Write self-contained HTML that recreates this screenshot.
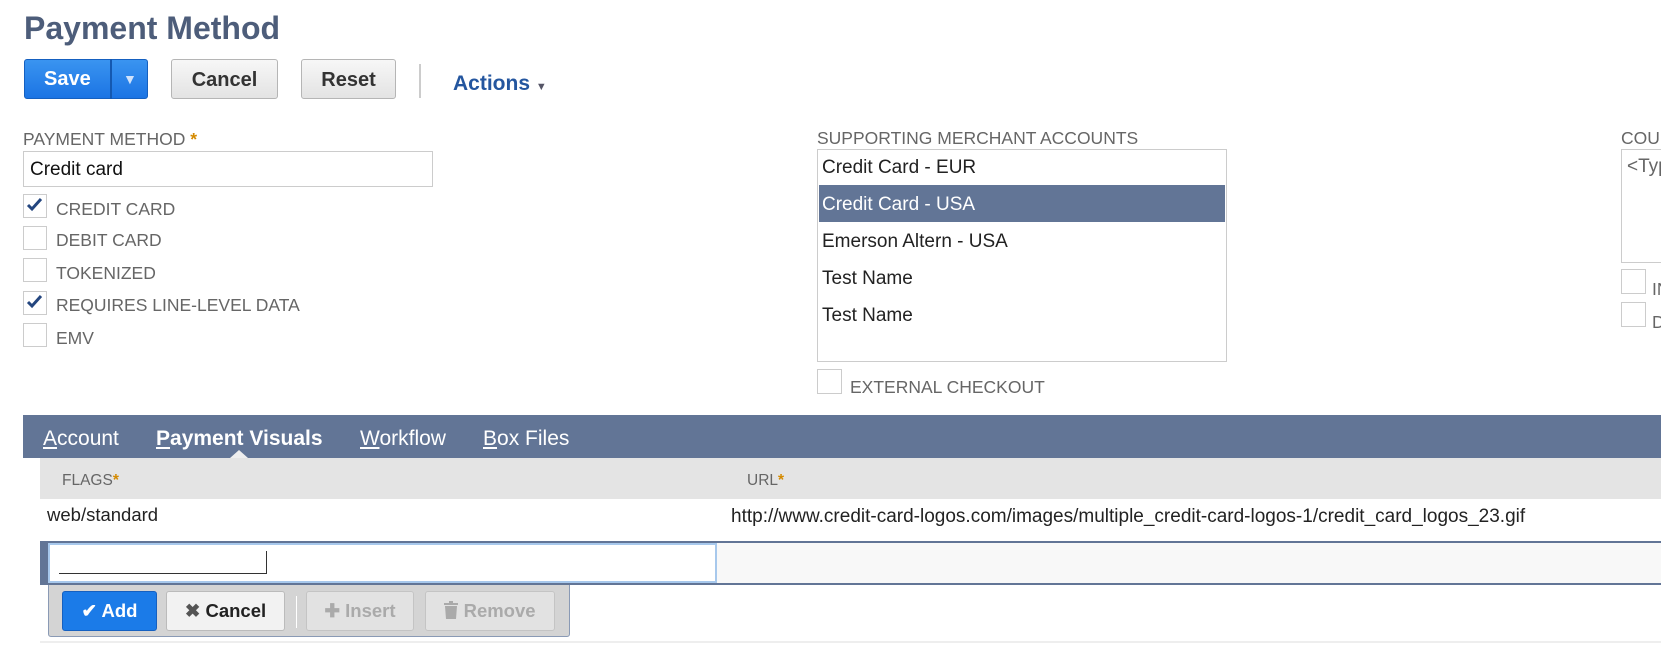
<!DOCTYPE html>
<html><head><meta charset="utf-8"><style>
*{box-sizing:border-box;margin:0;padding:0}
body{width:1661px;height:657px;background:#fff;font-family:"Liberation Sans",sans-serif;position:relative;overflow:hidden;color:#222}
.a{position:absolute;white-space:nowrap}
.btn{position:absolute;border:1px solid #b5b5b5;border-radius:3px;background:linear-gradient(#f7f7f7,#e3e3e3);font-weight:bold;font-size:20px;text-align:center;color:#333}
.lbl{position:absolute;font-size:17.5px;color:#666;white-space:nowrap}
.cb{position:absolute;width:24px;height:24px;border:1px solid #ccc;background:#fff}
.cb svg{position:absolute;left:2px;top:1px}
.ck{position:absolute;font-size:17.5px;color:#666;white-space:nowrap;line-height:20px}
.star{color:#d48a00;font-weight:bold}
.it{position:absolute;font-size:19px;left:822px;line-height:22px}
.tab{position:absolute;top:427px;font-size:21px;color:#fff;line-height:24px;white-space:nowrap}
.sb{position:absolute;top:591px;height:40px;border-radius:3px;font-weight:bold;font-size:18.5px;line-height:38px;text-align:center}
</style></head><body>
<div class="a" style="left:24px;top:10px;font-size:32px;font-weight:bold;color:#4d5d7a">Payment Method</div>

<div class="a" style="left:24px;top:59px;width:124px;height:40px;background:linear-gradient(#3a94f0,#1b74e4);border:1px solid #1560c0;border-radius:3px"></div>
<div class="a" style="left:44px;top:68px;font-size:20px;font-weight:bold;color:#fff">Save</div>
<div class="a" style="left:110px;top:59px;width:2px;height:40px;background:#1458b0"></div>
<div class="a" style="left:123px;top:71px;font-size:14px;color:#cfe2fb">▼</div>

<div class="btn" style="left:171px;top:59px;width:107px;height:40px;line-height:40px">Cancel</div>
<div class="btn" style="left:301px;top:59px;width:95px;height:40px;line-height:40px">Reset</div>
<div class="a" style="left:419px;top:64px;width:2px;height:34px;background:#ccc"></div>
<div class="a" style="left:453px;top:72px;font-size:21px;font-weight:bold;color:#24569f">Actions <span style="font-size:11px;color:#556">▼</span></div>

<div class="lbl" style="left:23px;top:129px">PAYMENT METHOD <span class="star">*</span></div>
<div class="a" style="left:23px;top:151px;width:410px;height:36px;border:1px solid #ccc"></div>
<div class="a" style="left:30px;top:159px;font-size:19px;color:#111">Credit card</div>

<div class="cb" style="left:23px;top:194px"><svg width="18" height="18" viewBox="0 0 18 18"><path d="M2 9l4 4 9-10" stroke="#24467f" stroke-width="3" fill="none"/></svg></div>
<div class="ck" style="left:56px;top:199px">CREDIT CARD</div>
<div class="cb" style="left:23px;top:226px"></div>
<div class="ck" style="left:56px;top:230px">DEBIT CARD</div>
<div class="cb" style="left:23px;top:258px"></div>
<div class="ck" style="left:56px;top:263px">TOKENIZED</div>
<div class="cb" style="left:23px;top:291px"><svg width="18" height="18" viewBox="0 0 18 18"><path d="M2 9l4 4 9-10" stroke="#24467f" stroke-width="3" fill="none"/></svg></div>
<div class="ck" style="left:56px;top:295px">REQUIRES LINE-LEVEL DATA</div>
<div class="cb" style="left:23px;top:323px"></div>
<div class="ck" style="left:56px;top:328px">EMV</div>

<div class="lbl" style="left:817px;top:128px">SUPPORTING MERCHANT ACCOUNTS</div>
<div class="a" style="left:817px;top:149px;width:410px;height:213px;border:1px solid #ccc"></div>
<div class="a" style="left:819px;top:185px;width:406px;height:37px;background:#627596"></div>
<div class="it" style="top:157px">Credit Card - EUR</div>
<div class="it" style="top:194px;color:#fff">Credit Card - USA</div>
<div class="it" style="top:231px">Emerson Altern - USA</div>
<div class="it" style="top:268px">Test Name</div>
<div class="it" style="top:305px">Test Name</div>
<div class="cb" style="left:817px;top:369px;width:25px;height:25px"></div>
<div class="ck" style="left:850px;top:377px">EXTERNAL CHECKOUT</div>

<div class="lbl" style="left:1621px;top:128px">COUNTRY</div>
<div class="a" style="left:1621px;top:149px;width:60px;height:114px;border:1px solid #ccc"></div>
<div class="a" style="left:1627px;top:156px;font-size:19px;color:#666">&lt;Type</div>
<div class="cb" style="left:1621px;top:269px;width:25px;height:25px"></div>
<div class="ck" style="left:1652px;top:279px">IN</div>
<div class="cb" style="left:1621px;top:302px;width:25px;height:25px"></div>
<div class="ck" style="left:1652px;top:312px">D</div>

<div class="a" style="left:23px;top:415px;width:1638px;height:43px;background:#627596"></div>
<div class="tab" style="left:43px"><u>A</u>ccount</div>
<div class="tab" style="left:156px;font-weight:bold"><u>P</u>ayment Visuals</div>
<div class="tab" style="left:360px"><u>W</u>orkflow</div>
<div class="tab" style="left:483px"><u>B</u>ox Files</div>
<div class="a" style="left:230px;top:450px;width:0;height:0;border-left:9px solid transparent;border-right:9px solid transparent;border-bottom:8px solid #eee"></div>

<div class="a" style="left:40px;top:458px;width:1621px;height:41px;background:#e4e4e4"></div>
<div class="a" style="left:62px;top:472px;font-size:15.5px;color:#666">FLAGS<span class="star">*</span></div>
<div class="a" style="left:747px;top:472px;font-size:15.5px;color:#666">URL<span class="star">*</span></div>
<div class="a" style="left:47px;top:504px;font-size:18.5px">web/standard</div>
<div class="a" style="left:731px;top:506px;font-size:19px">http://www.credit-card-logos.com/images/multiple_credit-card-logos-1/credit_card_logos_23.gif</div>

<div class="a" style="left:40px;top:541px;width:1621px;height:44px;background:#f8f8f8;border-top:2px solid #627596;border-bottom:2px solid #627596"></div>
<div class="a" style="left:40px;top:541px;width:8px;height:44px;background:#627596"></div>
<div class="a" style="left:48px;top:543px;width:669px;height:40px;border:2px solid #a7c8ec;background:#fff"></div>
<div class="a" style="left:59px;top:551px;width:208px;height:23px;border-bottom:1px solid #333;border-right:1px solid #333"></div>

<div class="a" style="left:40px;top:585px;width:1621px;height:58px;border-bottom:2px solid #eee"></div>
<div class="a" style="left:48px;top:585px;width:522px;height:52px;background:#d4d4d4;border:1px solid #8a9ab5;border-top:none;border-radius:0 0 3px 3px"></div>
<div class="sb" style="left:62px;width:95px;background:#1b7be8;border:1px solid #1560c0;color:#fff">✔ Add</div>
<div class="sb" style="left:166px;width:119px;background:#f2f2f2;border:1px solid #bbb;color:#222"><span style="color:#555">✖</span> Cancel</div>
<div class="a" style="left:296px;top:596px;width:1px;height:32px;background:#fff"></div>
<div class="sb" style="left:306px;width:108px;background:#e2e2e2;border:1px solid #c4c4c4;color:#aaa">✚ Insert</div>
<div class="sb" style="left:425px;width:130px;background:#e2e2e2;border:1px solid #c4c4c4;color:#aaa"><svg width="14" height="18" viewBox="0 0 14 18" style="vertical-align:-2px"><path d="M0 2h14v2H0zM5 0h4v2H5zM1 5h12l-1 13H2z" fill="#aaa"/></svg> Remove</div>
</body></html>
